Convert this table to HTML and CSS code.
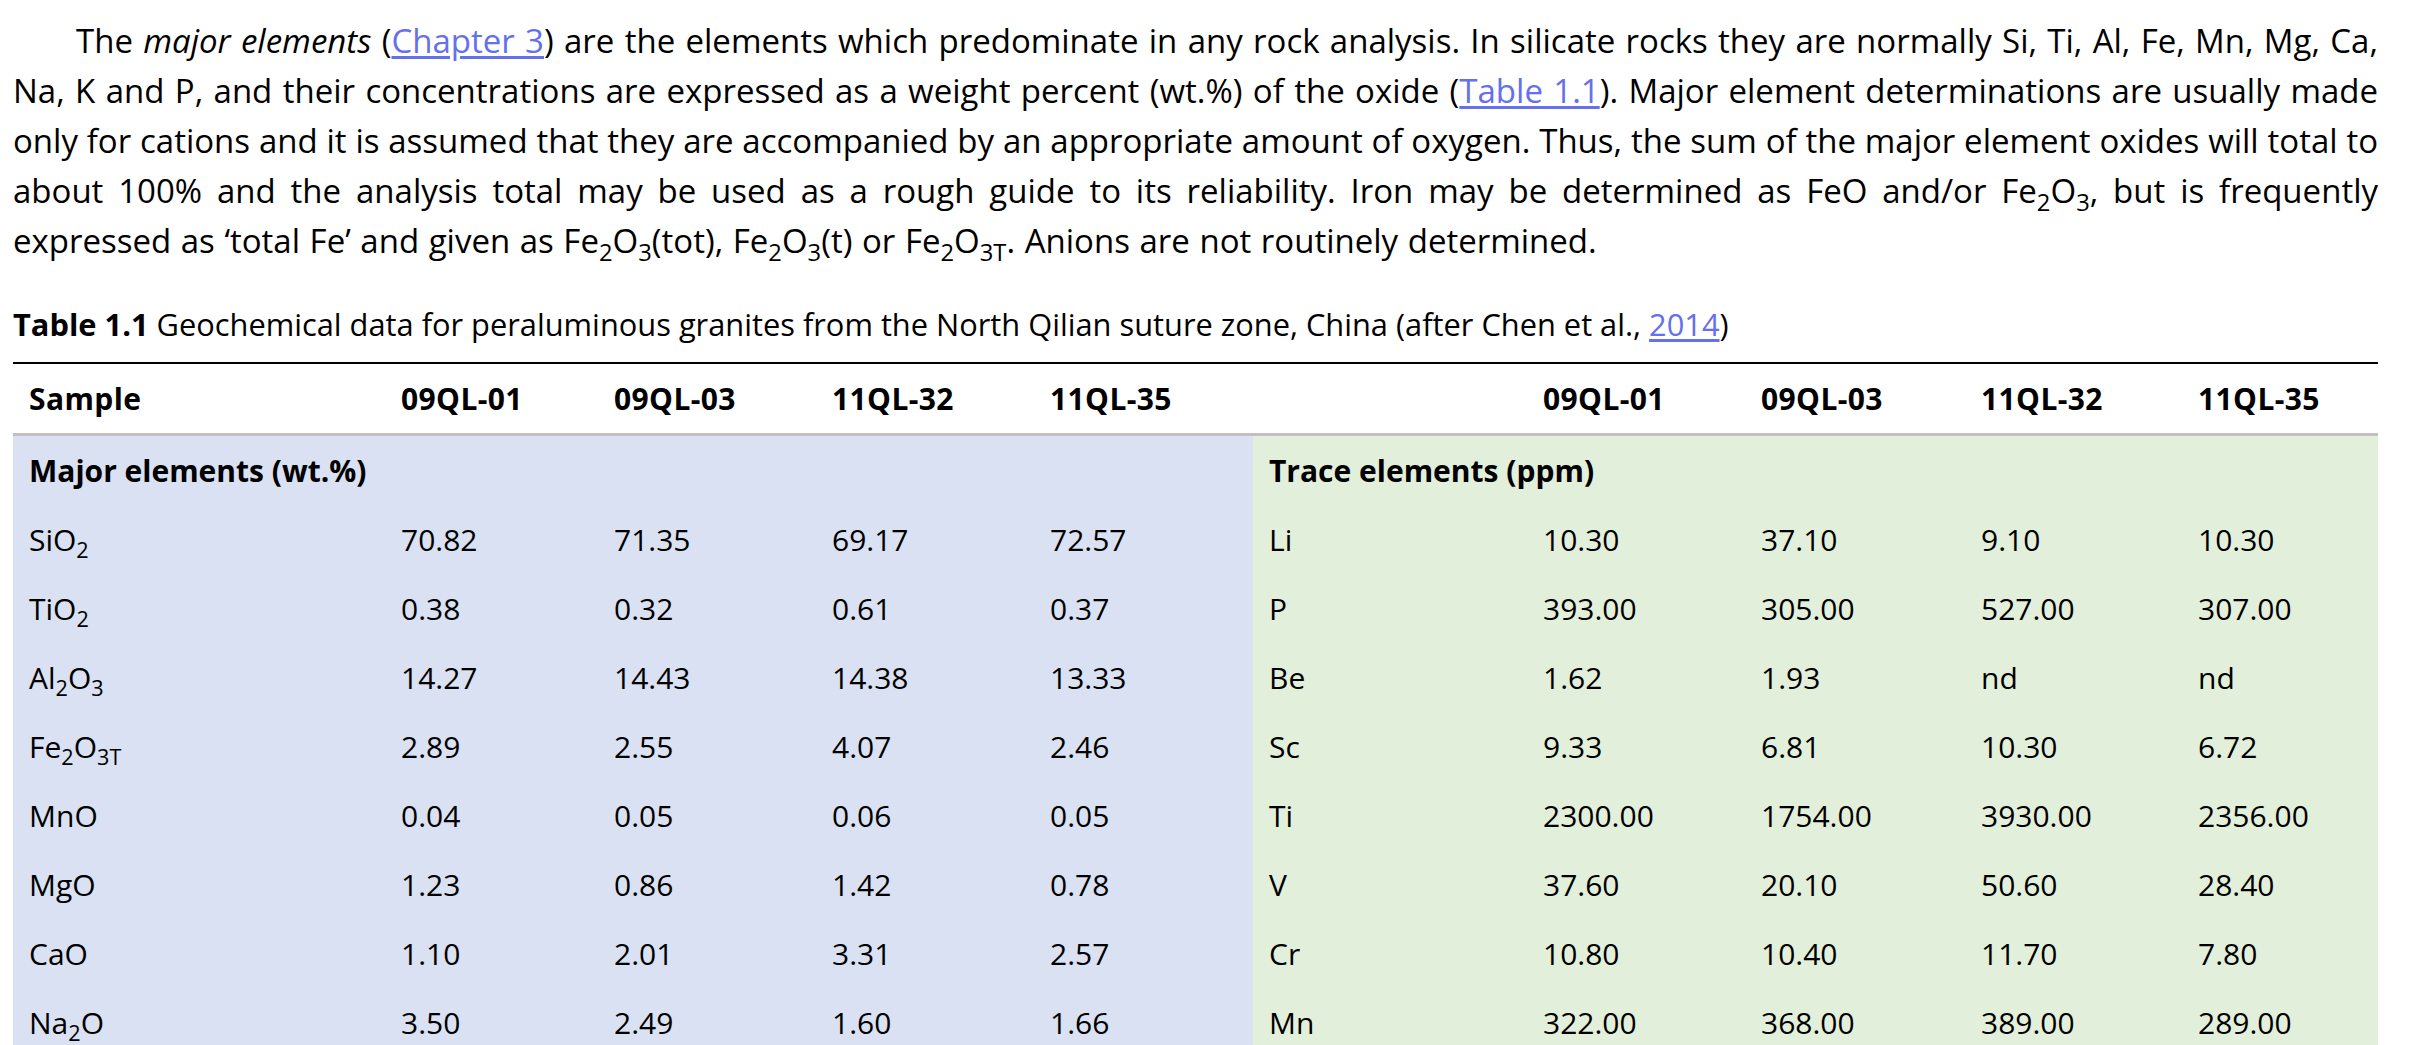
FILE: index.html
```html
<!DOCTYPE html>
<html lang="en">
<head>
<meta charset="utf-8">
<title>Major elements</title>
<link rel="stylesheet" href="styles.css">
</head>
<body>
<div class="page">
  <p class="para">
    <span class="line first">The <em>major elements</em> (<a href="#ch3">Chapter 3</a>) are the elements which predominate in any rock analysis. In silicate rocks they are normally Si, Ti, Al, Fe, Mn, Mg, Ca,</span>
    <span class="line">Na, K and P, and their concentrations are expressed as a weight percent (wt.%) of the oxide (<a href="#t11">Table 1.1</a>). Major element determinations are usually made</span>
    <span class="line">only for cations and it is assumed that they are accompanied by an appropriate amount of oxygen. Thus, the sum of the major element oxides will total to</span>
    <span class="line">about 100% and the analysis total may be used as a rough guide to its reliability. Iron may be determined as FeO and/or Fe<sub>2</sub>O<sub>3</sub>, but is frequently</span>
    <span class="line last">expressed as ‘total Fe’ and given as Fe<sub>2</sub>O<sub>3</sub>(tot), Fe<sub>2</sub>O<sub>3</sub>(t) or Fe<sub>2</sub>O<sub>3T</sub>. Anions are not routinely determined.</span>
  </p>

  <p class="caption" id="t11"><b>Table 1.1</b> Geochemical data for peraluminous granites from the North Qilian suture zone, China (after Chen et al., <a href="#chen2014">2014</a>)</p>

  <table class="data">
    <colgroup>
      <col class="maj c-label">
      <col class="maj c-a">
      <col class="maj c-b">
      <col class="maj c-c">
      <col class="maj c-d">
      <col class="tr c-tlabel">
      <col class="tr c-e">
      <col class="tr c-f">
      <col class="tr c-g">
      <col class="tr c-h">
    </colgroup>
    <thead>
      <tr>
        <th>Sample</th><th>09QL-01</th><th>09QL-03</th><th>11QL-32</th><th>11QL-35</th>
        <th></th><th>09QL-01</th><th>09QL-03</th><th>11QL-32</th><th>11QL-35</th>
      </tr>
    </thead>
    <tbody>
      <tr class="group">
        <td>Major elements (wt.%)</td><td></td><td></td><td></td><td></td>
        <td>Trace elements (ppm)</td><td></td><td></td><td></td><td></td>
      </tr>
      <tr><td>SiO<sub>2</sub></td><td>70.82</td><td>71.35</td><td>69.17</td><td>72.57</td><td>Li</td><td>10.30</td><td>37.10</td><td>9.10</td><td>10.30</td></tr>
      <tr><td>TiO<sub>2</sub></td><td>0.38</td><td>0.32</td><td>0.61</td><td>0.37</td><td>P</td><td>393.00</td><td>305.00</td><td>527.00</td><td>307.00</td></tr>
      <tr><td>Al<sub>2</sub>O<sub>3</sub></td><td>14.27</td><td>14.43</td><td>14.38</td><td>13.33</td><td>Be</td><td>1.62</td><td>1.93</td><td>nd</td><td>nd</td></tr>
      <tr><td>Fe<sub>2</sub>O<sub>3T</sub></td><td>2.89</td><td>2.55</td><td>4.07</td><td>2.46</td><td>Sc</td><td>9.33</td><td>6.81</td><td>10.30</td><td>6.72</td></tr>
      <tr><td>MnO</td><td>0.04</td><td>0.05</td><td>0.06</td><td>0.05</td><td>Ti</td><td>2300.00</td><td>1754.00</td><td>3930.00</td><td>2356.00</td></tr>
      <tr><td>MgO</td><td>1.23</td><td>0.86</td><td>1.42</td><td>0.78</td><td>V</td><td>37.60</td><td>20.10</td><td>50.60</td><td>28.40</td></tr>
      <tr><td>CaO</td><td>1.10</td><td>2.01</td><td>3.31</td><td>2.57</td><td>Cr</td><td>10.80</td><td>10.40</td><td>11.70</td><td>7.80</td></tr>
      <tr><td>Na<sub>2</sub>O</td><td>3.50</td><td>2.49</td><td>1.60</td><td>1.66</td><td>Mn</td><td>322.00</td><td>368.00</td><td>389.00</td><td>289.00</td></tr>
    </tbody>
  </table>
</div>
</body>
</html>
```

FILE: styles.css
```css
html, body {
  margin: 0;
  padding: 0;
  background: #ffffff;
}

body {
  font-family: "Open Sans", "Noto Sans", "Liberation Sans", sans-serif;
  color: #000000;
}

.page {
  width: 2365px;
  margin-left: 13px;
  padding-top: 16px;
}

a {
  color: #6470ee;
  text-decoration: underline;
  text-underline-offset: 3px;
}

.para {
  margin: 0;
  font-size: 33px;
  line-height: 50px;
  text-align: justify;
}

.para .line {
  display: block;
  white-space: nowrap;
  text-align-last: justify;
  text-indent: 0;
}

.para .line.first {
  text-indent: 63px;
}

.para .line.last {
  text-align-last: left;
  word-spacing: 1px;
}

sub {
  font-size: 0.72em;
  line-height: 0;
  vertical-align: -0.32em;
}

.caption {
  margin: 38px 0 18px 0;
  font-size: 30.8px;
  line-height: 40px;
}

.data {
  width: 2365px;
  table-layout: fixed;
  border-collapse: separate;
  border-spacing: 0;
  font-size: 30px;
}

.data col.maj { background: #d9e1f2; }
.data col.tr { background: #e2efda; }

.c-label { width: 372px; }
.c-a { width: 213px; }
.c-b { width: 218px; }
.c-c { width: 218px; }
.c-d { width: 219px; }
.c-tlabel { width: 274px; }
.c-e { width: 218px; }
.c-f { width: 220px; }
.c-g { width: 217px; }
.c-h { width: 196px; }

.data th,
.data td {
  padding: 16px 16px;
  line-height: 37px;
  text-align: left;
  vertical-align: middle;
  white-space: nowrap;
}

.data th {
  background: #ffffff;
  font-weight: bold;
  letter-spacing: 0.4px;
  border-top: 2px solid #000000;
  border-bottom: 3px solid #c0c0c0;
}

.data tr.group td {
  font-weight: bold;
}
```
